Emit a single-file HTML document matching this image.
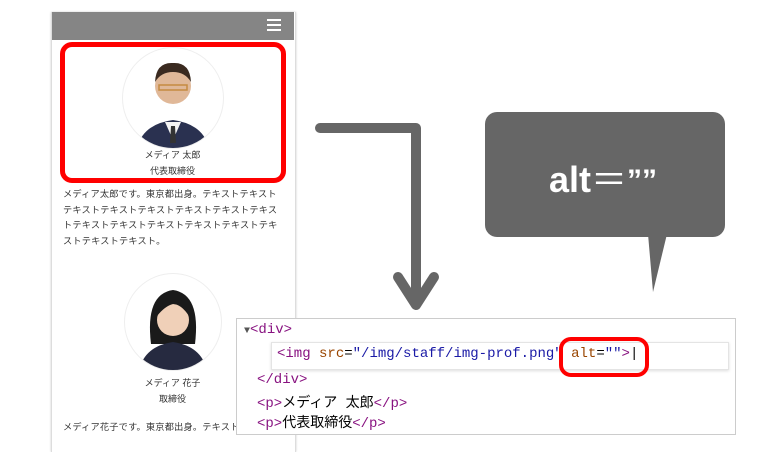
<!DOCTYPE html>
<html><head><meta charset="utf-8"><style>
body{margin:0;width:768px;height:451px;background:#fff;position:relative;overflow:hidden;font-family:"Liberation Sans","Noto Sans CJK JP",sans-serif}
.a{position:absolute}
.phone{left:51px;top:12px;width:243px;height:440px;border-left:1px solid #ddd;border-right:1px solid #ddd;box-shadow:0 0 2px #ccc}
.bar{left:52px;top:12px;width:242px;height:28px;background:#858585}
.ham{left:267px;top:19px;width:14px;height:2px;background:#fff;box-shadow:0 5px 0 #fff,0 10px 0 #fff}
.red{border:5px solid #f00;border-radius:12px}
.circ{border-radius:50%;border:1px solid #eee;background:#fff;overflow:hidden}
.t{font-size:9px;color:#333;text-align:center;width:243px;left:51px}
.p{left:63px;width:222px;font-size:9.2px;line-height:15.5px;color:#333;letter-spacing:.2px}
.code{left:236px;top:318px;width:498px;height:115px;border:1px solid #ccc;background:#fff;font-family:"Liberation Mono","Noto Sans CJK JP",monospace;font-size:14px}
.ln{position:absolute;white-space:pre}
.tag{color:#881280}.at{color:#994500}.v{color:#1a1aa6}
</style></head><body>
<div class="a phone"></div>
<div class="a bar"></div>
<div class="a ham"></div>
<div class="a red" style="left:60px;top:42px;width:216px;height:131px"></div>
<div class="a circ" style="left:122px;top:47px;width:100px;height:100px">
<svg width="100" height="100"><circle cx="50" cy="38" r="18" fill="#e0b898"/><path d="M32 34 Q33 14 50 15 Q67 14 68 34 Q62 24 50 24 Q38 24 32 34Z" fill="#3a2a20"/><rect x="36" y="37" width="28" height="5" fill="none" stroke="#c58a40" stroke-width="1.5"/><path d="M14 100 Q20 76 50 72 Q80 76 86 100Z" fill="#2a3150"/><path d="M42 74 L50 92 L58 74Z" fill="#f4f4f4"/><path d="M48 78 L52 78 L53 95 L47 95Z" fill="#333"/></svg></div>
<div class="a t" style="top:148px">メディア 太郎</div>
<div class="a t" style="top:164px">代表取締役</div>
<div class="a p" style="top:187px">メディア太郎です。東京都出身。テキストテキストテキストテキストテキストテキストテキストテキストテキストテキストテキストテキストテキストテキストテキストテキスト。</div>
<div class="a circ" style="left:124px;top:273px;width:96px;height:96px">
<svg width="96" height="96"><path d="M26 70 Q20 20 48 16 Q76 20 70 70Z" fill="#1a1a1a"/><circle cx="48" cy="46" r="16" fill="#f0d0b8"/><path d="M32 42 Q36 24 48 24 Q62 24 64 42 Q56 30 48 30 Q40 32 32 42Z" fill="#1a1a1a"/><path d="M14 96 Q20 72 48 68 Q76 72 82 96Z" fill="#262a40"/></svg></div>
<div class="a t" style="top:376px">メディア 花子</div>
<div class="a t" style="top:392px">取締役</div>
<div class="a p" style="top:420px;white-space:nowrap;overflow:hidden">メディア花子です。東京都出身。テキストテ</div>
<svg class="a" style="left:0;top:0" width="768" height="451">
<path d="M320 128 H416 V302" fill="none" stroke="#666" stroke-width="10" stroke-linecap="round" stroke-linejoin="round"/>
<path d="M398 277 L416 305 L434 277" fill="none" stroke="#666" stroke-width="10" stroke-linecap="round" stroke-linejoin="round"/>
<rect x="485" y="112" width="240" height="125" rx="12" fill="#666"/>
<path d="M648 234 L653 292 L667 234Z" fill="#666"/>
<text x="549" y="192" fill="#fff" font-size="36" font-weight="bold" font-family="Liberation Sans,sans-serif">alt<tspan font-family="Noto Sans CJK JP,sans-serif" font-weight="normal">＝</tspan><tspan font-size="30" dy="-2">””</tspan></text>
</svg>
<div class="a code">
<div class="ln" style="left:7px;top:3px"><span style="color:#555;font-size:10px">▼</span><span class="tag">&lt;div&gt;</span></div>
<div class="a" style="left:34px;top:23px;width:456px;height:26px;border:1px solid #e4e4e4;box-shadow:0 1px 3px #ddd"></div>
<div class="ln" style="left:40px;top:27px"><span class="tag">&lt;img </span><span class="at">src</span>=<span class="v">"/img/staff/img-prof.png"</span> <span class="at">alt</span>=<span class="v">""</span><span class="tag">&gt;</span>|</div>
<div class="ln" style="left:20px;top:53px"><span class="tag">&lt;/div&gt;</span></div>
<div class="ln" style="left:20px;top:73px"><span class="tag">&lt;p&gt;</span>メディア 太郎<span class="tag">&lt;/p&gt;</span></div>
<div class="ln" style="left:20px;top:93px"><span class="tag">&lt;p&gt;</span>代表取締役<span class="tag">&lt;/p&gt;</span></div>
</div>
<div class="a red" style="left:559px;top:337px;width:82px;height:32px;border-width:4px"></div>
</body></html>
